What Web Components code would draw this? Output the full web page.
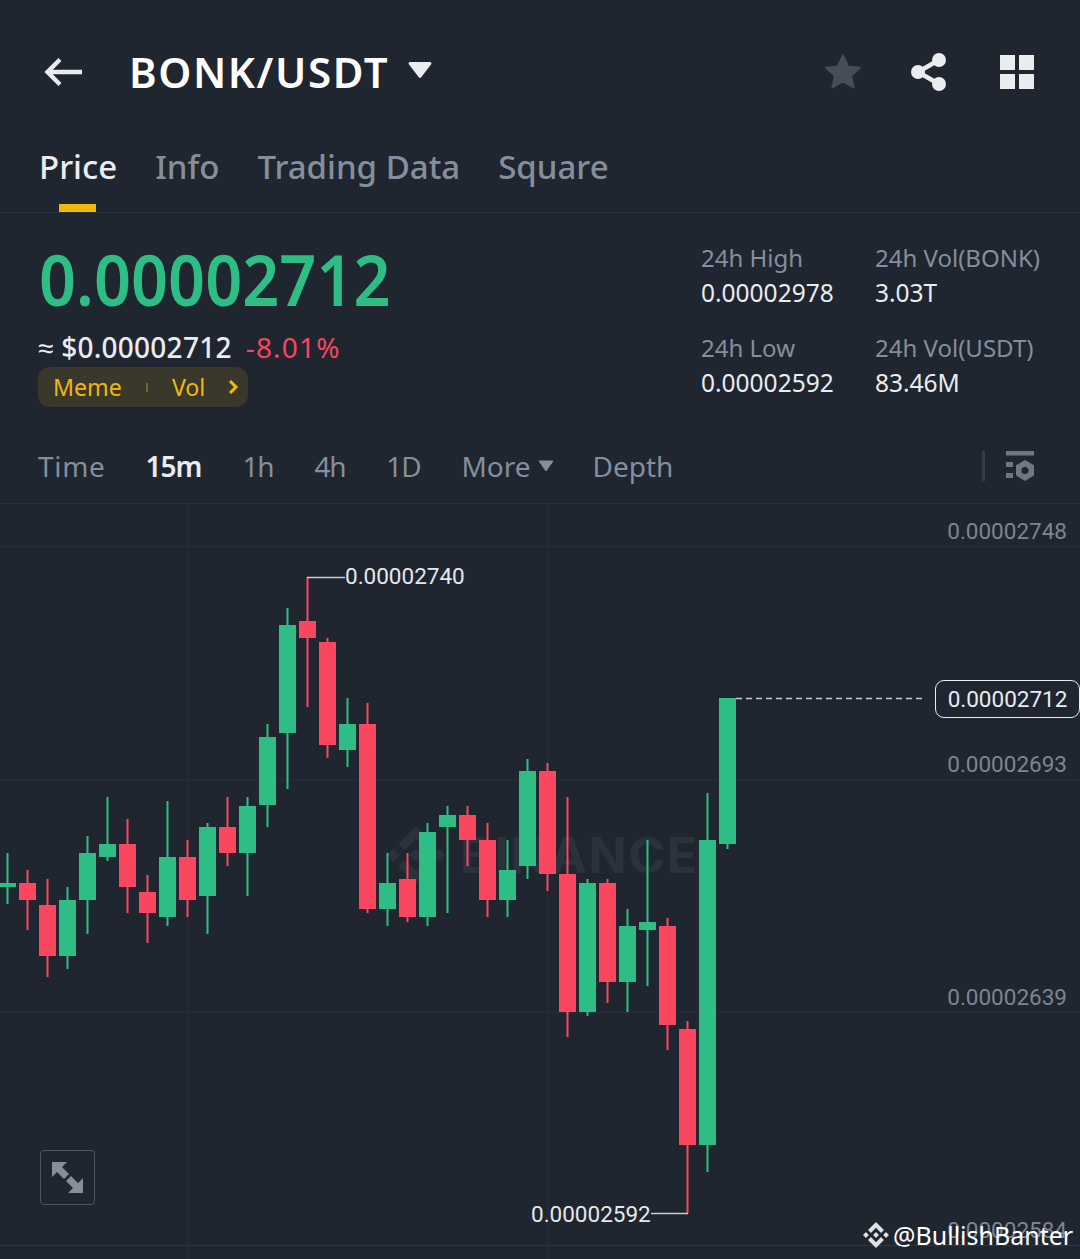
<!DOCTYPE html>
<html lang="en">
<head>
<meta charset="utf-8">
<title>BONK/USDT</title>
<style>
    html, body {
        margin: 0;
        height: 1259px;
        overflow: hidden;
        background: #1f2630;
        color: #eaecef;
        font-family: "Noto Sans", "Liberation Sans", sans-serif;
    }
</style>
</head>
<body>
<pair-header></pair-header>
<market-tabs>
    <span slot="active">Price</span>
    <span>Info</span>
    <span>Trading Data</span>
    <span>Square</span>
</market-tabs>
<price-panel></price-panel>
<interval-bar></interval-bar>
<candle-chart></candle-chart>

<script>
const BINANCE_LOGO = 'M16.624 13.9202l2.7175 2.7154-7.353 7.353-7.353-7.352 2.7175-2.7164 4.6355 4.6595 4.6356-4.6595zm4.6366-4.6366L24 12l-2.7154 2.7164L18.5682 12l2.6924-2.7164zm-9.272.001l2.7163 2.6914-2.7164 2.7174v-.001L9.2721 12l2.7164-2.7154zm-9.2722-.001L5.4088 12l-2.6914 2.6924L0 12l2.7164-2.7164zM11.9885.0115l7.353 7.329-2.7174 2.7154-4.6356-4.6356-4.6355 4.6595-2.7174-2.7154 7.353-7.353z';

class PairHeader extends HTMLElement {
    constructor() {
        super();
        this.attachShadow({ mode: 'open' }).innerHTML = `
        <style>
            :host {
                display: flex;
                align-items: center;
                height: 144px;
                padding: 0 46px 0 44px;
            }
            svg { display: block; flex-shrink: 0; }
            .title {
                margin-left: 47px;
                font-size: 42px;
                font-weight: 600;
                line-height: 1;
                color: #fff;
                letter-spacing: 1.6px;
            }
            .caret { margin-left: 19px; margin-top: -4px; }
            .actions {
                margin-left: auto;
                display: flex;
                align-items: center;
            }
            .share { margin-left: 49px; }
            .grid { margin-left: 53px; }
        </style>
        <svg width="38" height="30" viewBox="0 0 38 30" fill="none" stroke="#eaecef" stroke-width="4.4">
            <path d="M38 15H4"/>
            <path d="M16 2.5L3.5 15 16 27.5"/>
        </svg>
        <div class="title">BONK/USDT</div>
        <svg class="caret" width="24" height="18" viewBox="0 0 24 18">
            <path d="M2 1h20a1.5 1.5 0 0 1 1 2.6L13 16.5a1.5 1.5 0 0 1-2 0L1 3.6A1.5 1.5 0 0 1 2 1z" fill="#eaecef"/>
        </svg>
        <div class="actions">
            <svg width="38" height="38" viewBox="0 0 38 38">
                <path d="M19 2.5l5 11 12 1.3-9 8 2.6 11.7L19 28.5 8.4 34.5l2.6-11.7-9-8 12-1.3z" fill="#474d57" stroke="#474d57" stroke-width="2" stroke-linejoin="round"/>
            </svg>
            <svg class="share" width="36" height="38" viewBox="0 0 36 38" fill="#eaecef" stroke="#eaecef">
                <path d="M7 19L28 7M7 19l21 12" stroke-width="4.5" fill="none"/>
                <circle cx="7" cy="19" r="7" stroke="none"/>
                <circle cx="28" cy="7" r="7" stroke="none"/>
                <circle cx="28" cy="31" r="7" stroke="none"/>
            </svg>
            <svg class="grid" width="34" height="34" viewBox="0 0 34 34" fill="#eaecef">
                <rect width="15" height="15"/>
                <rect x="19" width="15" height="15"/>
                <rect y="19" width="15" height="15"/>
                <rect x="19" y="19" width="15" height="15"/>
            </svg>
        </div>
        `;
    }
}

class MarketTabs extends HTMLElement {
    constructor() {
        super();
        this.attachShadow({ mode: 'open' }).innerHTML = `
        <style>
            :host {
                display: flex;
                gap: 38px;
                height: 68px;
                padding-left: 39px;
                border-bottom: 1px solid #2b323d;
                font-size: 33px;
                font-weight: 500;
                line-height: 45px;
                color: #848e9c;
            }
            .active {
                position: relative;
                color: #eaecef;
            }
            .active::after {
                content: "";
                position: absolute;
                left: 20px;
                width: 37px;
                bottom: 0;
                height: 8px;
                background: #f0b90b;
            }
            .rest { display: flex; gap: 38px; }
        </style>
        <div class="active"><slot name="active"></slot></div>
        <div class="rest"><slot></slot></div>
        `;
    }
}

class PricePanel extends HTMLElement {
    constructor() {
        super();
        this.attachShadow({ mode: 'open' }).innerHTML = `
        <style>
            :host {
                display: flex;
                justify-content: space-between;
                height: 217px;
                padding: 0 38px;
            }
            .last {
                margin-top: 27px;
                margin-left: 1px;
                font-size: 70px;
                font-weight: 600;
                line-height: 78px;
                color: #2ebd85;
                transform: scaleX(0.926);
                transform-origin: left center;
            }
            .fiat {
                margin-top: 11px;
                display: flex;
                gap: 14px;
                font-size: 28px;
                line-height: 36px;
                letter-spacing: 0.25px;
                margin-bottom: 2px;
            }
            .fiat b { font-weight: 500; }
            .down { color: #f6465d; letter-spacing: 1.2px; }
            .tag {
                display: inline-flex;
                align-items: center;
                width: 210px;
                height: 40px;
                box-sizing: border-box;
                padding-left: 15px;
                border-radius: 12px;
                background: #3a372b;
                color: #f0b90b;
                font-size: 23.2px;
            }
            .dot { width: 2px; height: 9px; margin: 0 24px; background: #6e6330; }
            .tag svg { margin-left: 23px; }
            .stats {
                margin-top: 27px;
                display: grid;
                grid-template-columns: 174px 167px;
                grid-auto-rows: 90px;
                font-size: 24.5px;
                line-height: 35px;
            }
            .stats span { display: block; font-size: 24px; color: #848e9c; }
            .stats div { white-space: nowrap; }
        </style>
        <div>
            <div class="last">0.00002712</div>
            <div class="fiat"><b>≈ $0.00002712</b><span class="down">-8.01%</span></div>
            <div class="tag">
                <span>Meme</span><i class="dot"></i><span>Vol</span>
                <svg width="11" height="16" viewBox="0 0 11 16" fill="none" stroke="#f0b90b" stroke-width="3"><path d="M2 2l6 6-6 6"/></svg>
            </div>
        </div>
        <div class="stats">
            <div><span>24h High</span>0.00002978</div>
            <div><span>24h Vol(BONK)</span>3.03T</div>
            <div><span>24h Low</span>0.00002592</div>
            <div><span>24h Vol(USDT)</span>83.46M</div>
        </div>
        `;
    }
}

class IntervalBar extends HTMLElement {
    constructor() {
        super();
        this.attachShadow({ mode: 'open' }).innerHTML = `
        <style>
            :host {
                display: flex;
                align-items: center;
                gap: 41px;
                height: 71px;
                padding: 0 45px 2px 38px;
                border-bottom: 1px solid #2b323d;
                font-size: 28px;
                color: #848e9c;
            }
            .time { letter-spacing: 0.7px; margin-right: -1px; }
            .tf { letter-spacing: -1.2px; }
            .on { color: #eaecef; font-weight: 600; letter-spacing: -1px; }
            .more { display: flex; align-items: center; gap: 7px; }
            .depth { margin-left: -2px; }
            .tools { margin-left: auto; display: flex; align-items: center; gap: 20px; }
            .sep { width: 3px; height: 30px; background: #363d49; }
            svg { display: block; }
        </style>
        <span class="time">Time</span>
        <span class="on">15m</span>
        <span class="tf">1h</span>
        <span class="tf">4h</span>
        <span class="tf">1D</span>
        <span class="more">More
            <svg width="16" height="12" viewBox="0 0 16 12"><path d="M1 1h14L8 11z" fill="#848e9c" stroke="#848e9c" stroke-linejoin="round"/></svg>
        </span>
        <span class="depth">Depth</span>
        <div class="tools">
            <i class="sep"></i>
            <svg width="30" height="30" viewBox="0 0 30 30" fill="#6f7785">
                <rect x="1" width="28" height="4.5"/>
                <rect x="1" y="11" width="7" height="5"/>
                <rect x="1" y="22" width="7" height="5"/>
                <path fill-rule="evenodd" d="M20 9l9 5.2v10.3L20 30l-9-5.5V14.2zM20 16a3.5 3.5 0 1 0 0 7 3.5 3.5 0 0 0 0-7z"/>
            </svg>
        </div>
        `;
    }
}

// green(1)/red(0), wick top, wick bottom, body top, body bottom
const CANDLES = [
    [1, 853, 904, 883, 887], [0, 870, 930, 883, 900], [0, 879, 977, 905, 956], [1, 887, 969, 900, 956],
    [1, 836, 934, 853, 900], [1, 797, 861, 844, 857], [0, 819, 913, 844, 887], [0, 875, 943, 892, 913],
    [1, 801, 926, 857, 917], [0, 840, 917, 857, 900], [1, 823, 934, 827, 896], [0, 797, 866, 827, 853],
    [1, 797, 896, 806, 853], [1, 724, 827, 737, 805], [1, 608, 789, 625, 733], [0, 577, 707, 621, 638],
    [0, 638, 758, 642, 745], [1, 698, 767, 724, 750], [0, 703, 913, 724, 909], [1, 853, 926, 883, 909],
    [0, 853, 922, 879, 917], [1, 823, 926, 832, 917], [1, 806, 913, 815, 827], [0, 806, 866, 815, 840],
    [0, 823, 917, 840, 900], [1, 840, 917, 870, 900], [1, 759, 879, 771, 866], [0, 763, 891, 771, 874],
    [0, 797, 1037, 874, 1012], [1, 879, 1016, 883, 1012], [0, 879, 1003, 883, 982], [1, 909, 1012, 926, 982],
    [1, 840, 986, 922, 930], [0, 918, 1050, 926, 1025], [0, 1021, 1213, 1029, 1145], [1, 793, 1172, 840, 1145],
    [1, 698, 849, 698, 844]
];

class CandleChart extends HTMLElement {
    constructor() {
        super();
        const bars = CANDLES.map(([up, wickTop, wickBottom, bodyTop, bodyBottom], i) => {
            const center = 7.5 + i * 20;
            const color = up ? '#2ebd85' : '#fb4660';
            return `<rect x="${center - 1}" y="${wickTop}" width="2" height="${wickBottom - wickTop}" fill="${color}"/>` +
                `<rect x="${center - 8.5}" y="${bodyTop}" width="17" height="${bodyBottom - bodyTop}" fill="${color}"/>`;
        }).join('');

        this.attachShadow({ mode: 'open' }).innerHTML = `
        <style>
            :host {
                display: block;
                position: relative;
                height: 755px;
                overflow: hidden;
                font-family: Roboto, "Liberation Sans", sans-serif;
                font-size: 22.5px;
                line-height: 28px;
            }
            svg.plot { position: absolute; inset: 0; display: block; }
            .label { position: absolute; white-space: nowrap; color: #e6e8ea; }
            .axis { position: absolute; right: 13px; color: #7c8592; }
            .now {
                position: absolute;
                left: 935px;
                top: 176px;
                width: 145px;
                height: 38px;
                box-sizing: border-box;
                border: 1px solid #eaecef;
                border-radius: 9px;
                text-align: center;
                line-height: 37px;
                color: #eaecef;
                background: #1f2630;
            }
            .mark {
                position: absolute;
                left: 387px;
                top: 322px;
                display: flex;
                align-items: center;
                gap: 15px;
                font-family: Inter, "Liberation Sans", sans-serif;
                font-size: 50px;
                font-weight: 700;
                letter-spacing: 1.5px;
                color: #2b323c;
            }
            .expand {
                position: absolute;
                left: 40px;
                top: 646px;
                width: 55px;
                height: 55px;
                box-sizing: border-box;
                border: 1px solid #4d5561;
                border-radius: 4px;
            }
            .credit {
                position: absolute;
                left: 863px;
                top: 715px;
                display: flex;
                align-items: center;
                gap: 4px;
                font-family: "Noto Sans", sans-serif;
                font-size: 25px;
                line-height: 32px;
                color: #fff;
            }
            .credit svg { display: block; }
        </style>
        <div class="mark">
            <svg width="58" height="58" viewBox="0 0 24 24" fill="#2b323c"><path d="${BINANCE_LOGO}"/></svg>
            <span>BINANCE</span>
        </div>
        <svg class="plot" width="1080" height="755" viewBox="0 504 1080 755">
            <g fill="#272e38">
                <rect x="0" y="546" width="1080" height="1"/>
                <rect x="0" y="779" width="1080" height="1"/>
                <rect x="0" y="1012" width="1080" height="1"/>
                <rect x="0" y="1245" width="1080" height="1" fill="#2f3640"/>
                <rect x="187" y="504" width="1" height="755"/>
                <rect x="547" y="504" width="1" height="755"/>
            </g>
            ${bars}
            <path d="M307 577.5H345M651 1213.5H688" stroke="#c9ccd0" stroke-width="1.5" fill="none"/>
            <path d="M736 698.5H922" stroke="#c9ccd0" stroke-width="1.5" stroke-dasharray="6 4" fill="none"/>
        </svg>
        <span class="axis" style="top:13px">0.00002748</span>
        <span class="axis" style="top:246px">0.00002693</span>
        <span class="axis" style="top:479px">0.00002639</span>
        <span class="axis" style="top:712px">0.00002584</span>
        <span class="label" style="left:345px;top:58px">0.00002740</span>
        <span class="label" style="left:531px;top:696px">0.00002592</span>
        <div class="now">0.00002712</div>
        <div class="expand">
            <svg width="53" height="53" viewBox="0 0 53 53" fill="#848e9c">
                <path d="M11 11h15l-5 5 7 7-5 5-7-7-5 5z"/>
                <path d="M42 42H27l5-5-7-7 5-5 7 7 5-5z"/>
            </svg>
        </div>
        <div class="credit">
            <svg width="26" height="26" viewBox="0 0 24 24" fill="#dfe1e4"><path d="${BINANCE_LOGO}"/></svg>
            <span>@BullishBanter</span>
        </div>
        `;
    }
}

customElements.define('pair-header', PairHeader);
customElements.define('market-tabs', MarketTabs);
customElements.define('price-panel', PricePanel);
customElements.define('interval-bar', IntervalBar);
customElements.define('candle-chart', CandleChart);
</script>
</body>
</html>
